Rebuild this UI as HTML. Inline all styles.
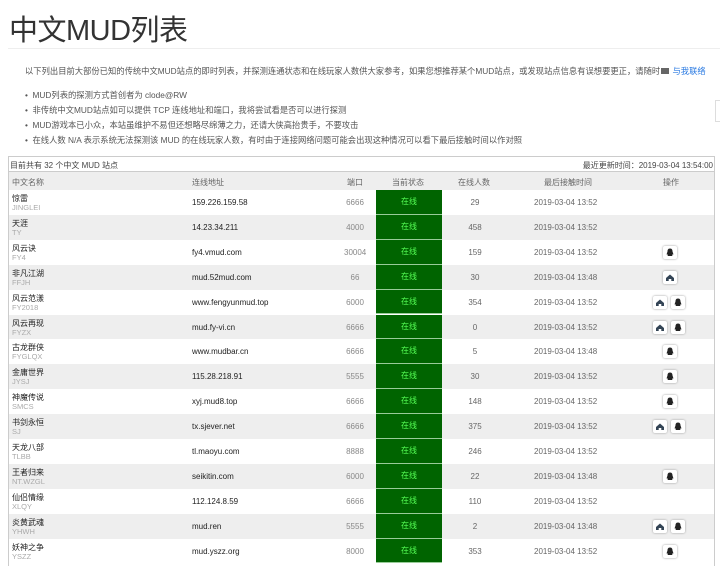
<!DOCTYPE html><html><head><meta charset="utf-8"><style>
*{margin:0;padding:0;box-sizing:border-box}
body{width:720px;height:557px;overflow:hidden;background:#fff;font-family:"Liberation Sans","Noto Sans CJK SC",sans-serif;color:#555;position:relative}
.a{position:absolute;white-space:nowrap}
h1{position:absolute;left:9px;top:7px;font-size:29px;font-weight:normal;color:#333;letter-spacing:-0.5px}
.hr{position:absolute;left:8px;top:48px;width:712px;height:1px;background:#eee}
.s{font-size:8.3px;color:#555}
.tb{position:absolute;left:8px;top:156px;width:707px;height:410px;border:1px solid #ccc;border-bottom:none}
.row{position:absolute;left:0;width:705px;height:24.9px;font-size:8px}
.g{background:#eee}
.st{position:absolute;left:367px;width:66px;height:24.9px;background:#006400;color:#5f5;text-align:center;line-height:24.9px;border-bottom:1px solid #9c9}
.ic{position:absolute;top:6px;width:14px;height:13px;background:#fff;border-radius:2px;box-shadow:0 0 2px #999}
</style></head><body>
<h1>中文MUD列表</h1><div class="hr"></div>
<div class="a s" style="left:25px;top:65px">以下列出目前大部份已知的传统中文MUD站点的即时列表，并探测连通状态和在线玩家人数供大家参考，如果您想推荐某个MUD站点，或发现站点信息有误想要更正，请随时<span style="display:inline-block;width:8px;height:6px;background:#666;margin:0 1px"></span> <span style="color:#2a7ae2">与我联络</span></div>
<div class="a s" style="left:25px;top:89px">• &nbsp;MUD列表的探测方式首创者为 clode@RW</div>
<div class="a s" style="left:25px;top:104px">• &nbsp;非传统中文MUD站点如可以提供 TCP 连线地址和端口，我将尝试看是否可以进行探测</div>
<div class="a s" style="left:25px;top:119px">• &nbsp;MUD游戏本已小众，本站虽维护不易但还想略尽绵薄之力，还请大侠高抬贵手，不要攻击</div>
<div class="a s" style="left:25px;top:134px">• &nbsp;在线人数 N/A 表示系统无法探测该 MUD 的在线玩家人数，有时由于连接网络问题可能会出现这种情况可以看下最后接触时间以作对照</div>
<div class="a" style="left:715px;top:100px;width:5px;height:22px;border:1px solid #ddd;border-right:none"></div>
<div class="tb" id="t">
<div class="a s" style="left:1px;top:3px;color:#444;font-size:8px">目前共有 32 个中文 MUD 站点</div>
<div class="a s" style="right:1px;top:3px;color:#444;font-size:8px">最近更新时间：2019-03-04 13:54:00</div>
<div class="row g" style="top:14px;height:19px;border-top:1px solid #ccc;color:#666">
<span class="a" style="left:3px;top:5px">中文名称</span><span class="a" style="left:183px;top:5px">连线地址</span><span class="a" style="left:338px;top:5px">端口</span><span class="a" style="left:383px;top:5px">当前状态</span><span class="a" style="left:449px;top:5px">在线人数</span><span class="a" style="left:535px;top:5px">最后接触时间</span><span class="a" style="left:654px;top:5px">操作</span></div>
</div>
<script>
var d=[["惊雷","JINGLEI","159.226.159.58","6666","29","52",""],["天涯","TY","14.23.34.211","4000","458","52",""],["风云诀","FY4","fy4.vmud.com","30004","159","52","q"],["非凡江湖","FFJH","mud.52mud.com","66","30","48","h"],["风云范漾","FY2018","www.fengyunmud.top","6000","354","52","hq"],["风云再现","FYZX","mud.fy-vi.cn","6666","0","52","hq"],["古龙群侠","FYGLQX","www.mudbar.cn","6666","5","48","q"],["金庸世界","JYSJ","115.28.218.91","5555","30","52","q"],["神魔传说","SMCS","xyj.mud8.top","6666","148","52","q"],["书剑永恒","SJ","tx.sjever.net","6666","375","52","hq"],["天龙八部","TLBB","tl.maoyu.com","8888","246","52",""],["王者归来","NT.WZGL","seikitin.com","6000","22","48","q"],["仙侣情缘","XLQY","112.124.8.59","6666","110","52",""],["炎黄武魂","YHWH","mud.ren","5555","2","48","hq"],["妖神之争","YSZZ","mud.yszz.org","8000","353","52","q"]];
var H='<svg width="14" height="13" viewBox="0 0 14 13"><path d="M3 7L7 3.5L11 7V10H8.3V8H5.7V10H3Z" fill="#345"/></svg>';
var Q='<svg width="14" height="13" viewBox="0 0 14 13"><path d="M7 2.5C5 2.5 4.5 4 4.5 5.5L3.5 8.5L4.5 8.3L4.8 10H9.2L9.5 8.3L10.5 8.5L9.5 5.5C9.5 4 9 2.5 7 2.5Z" fill="#222"/></svg>';
var t=document.getElementById('t'),s='';
d.forEach(function(r,i){var top=33+i*24.9;var ic='';
if(r[6]=='q')ic='<div class="ic" style="left:654px">'+Q+'</div>';
if(r[6]=='h')ic='<div class="ic" style="left:654px">'+H+'</div>';
if(r[6]=='hq')ic='<div class="ic" style="left:644px">'+H+'</div><div class="ic" style="left:662px">'+Q+'</div>';
s+='<div class="row'+(i%2?' g':'')+'" style="top:'+top+'px"><span class="a" style="left:3px;top:3px;color:#222">'+r[0]+'</span><span class="a" style="left:3px;top:13px;color:#aaa;font-size:7.5px">'+r[1]+'</span><span class="a" style="left:183px;top:8px;color:#222">'+r[2]+'</span><span class="a" style="left:335px;top:8px;width:22px;text-align:center;color:#888">'+r[3]+'</span><div class="st">在线</div><span class="a" style="left:446px;top:8px;width:40px;text-align:center;color:#666">'+r[4]+'</span><span class="a" style="left:525px;top:8px;color:#666">2019-03-04 13:'+r[5]+'</span>'+ic+'</div>';});
t.insertAdjacentHTML('beforeend',s);
</script>
</body></html>
